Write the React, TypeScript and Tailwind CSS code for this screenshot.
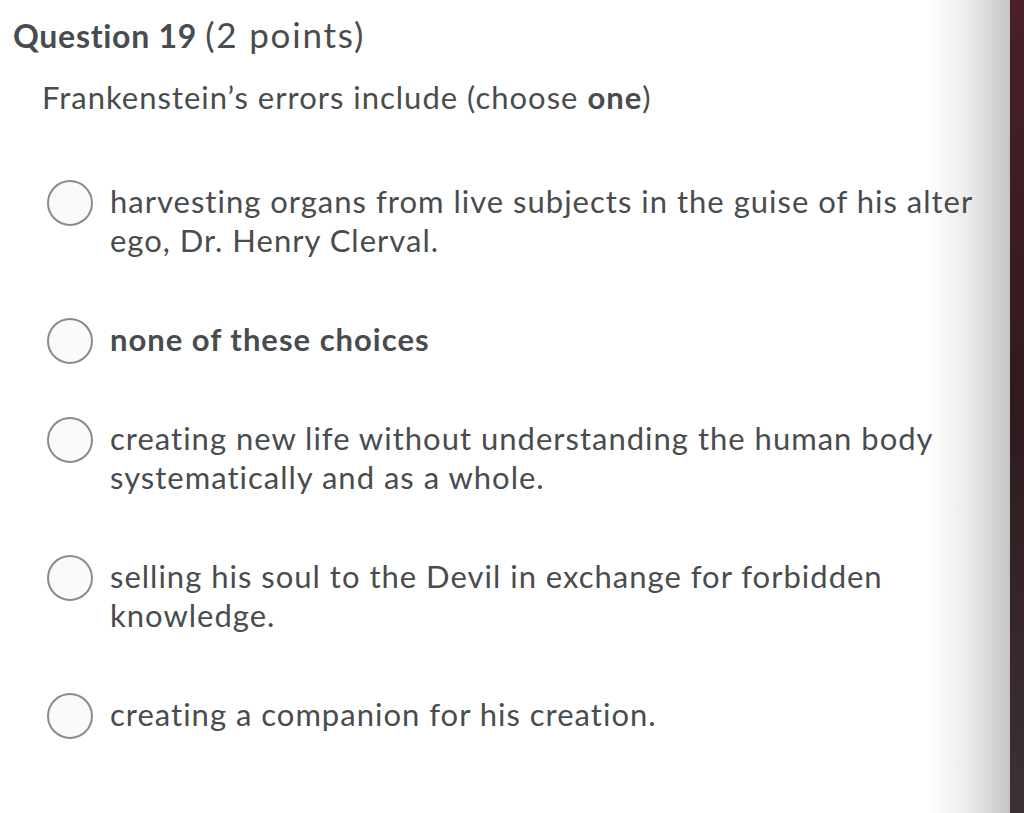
import React from 'react';

const options = [
  { text: 'harvesting organs from live subjects in the guise of his alter ego, Dr. Henry Clerval.', bold: false },
  { text: 'none of these choices', bold: true },
  { text: 'creating new life without understanding the human body systematically and as a whole.', bold: false },
  { text: 'selling his soul to the Devil in exchange for forbidden knowledge.', bold: false },
  { text: 'creating a companion for his creation.', bold: false },
];

const App: React.FC = () => {
  return (
    <div className="flex h-[813px] w-[1024px] overflow-hidden bg-white font-['Lato',sans-serif] text-[#494c4e]">
      <div className="relative flex-1 bg-white">
        {/* page edge shadow */}
        <div className="pointer-events-none absolute top-0 right-0 h-full w-[84px] bg-gradient-to-r from-white via-[#ececec] to-[#c4c4c4]" />
        <div className="relative pl-[13px] pt-[14px]">
          <h1 className="h-[40px] text-[32px] leading-[40px] whitespace-nowrap">
            <span className="font-bold tracking-[0.7px]">Question 19</span>{' '}
            <span className="text-[35px] tracking-[1.8px]">(2 points)</span>
          </h1>
          <p className="mt-[24px] pl-[29px] text-[31px] leading-[39px] tracking-[1px]">
            Frankenstein’s errors include (choose <span className="font-bold">one</span>)
          </p>
          <div className="mt-[65px] flex flex-col gap-[60px] pl-[34px]">
            {options.map((opt, i) => (
              <label key={i} className="flex items-start gap-[17px]">
                <span className="mt-[-2px] mb-[-7px] h-[46px] w-[46px] shrink-0 rounded-full border-2 border-[#8a8b8c] bg-[#f9fafc]" />
                <span
                  className={`w-[880px] text-[31px] leading-[39px] tracking-[1px] ${opt.bold ? 'font-bold tracking-[0.6px]' : ''}`}
                >
                  {opt.text}
                </span>
              </label>
            ))}
          </div>
        </div>
      </div>
      <div className="w-[14px] shrink-0 bg-gradient-to-b from-[#4a1f28] via-[#2f1a1e] to-[#3b3133]" />
    </div>
  );
};

export default App;
